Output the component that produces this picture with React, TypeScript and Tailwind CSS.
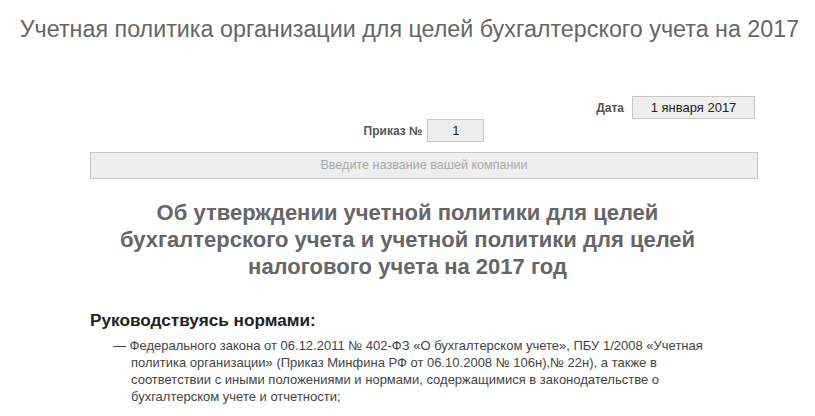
export default function App() {
  return (
    <div className="min-h-screen bg-white text-[#666]" style={{ fontFamily: '"Liberation Sans", Arial, sans-serif' }}>
      <h1 className="pl-[4px] pt-[15px] text-center text-[23.3px] font-normal leading-[28px] text-[#666]">
        Учетная политика организации для целей бухгалтерского учета на 2017
      </h1>

      <div className="ml-[90px] mt-[53px] w-[668px]">
        <div className="flex items-center justify-end gap-[8px] pr-[3px]">
          <span className="text-[12px] font-bold text-[#555]">Дата</span>
          <div className="flex h-[23px] w-[123px] items-center justify-center border border-[#c8c8c8] bg-[#eeeeee] text-[13px] text-[#222]">
            1 января 2017
          </div>
        </div>
        <div className="flex items-center justify-center gap-[5px]">
          <span className="text-[12px] font-bold text-[#555]">Приказ №</span>
          <div className="flex h-[23px] w-[57px] items-center justify-center border border-[#c8c8c8] bg-[#eeeeee] text-[13px] text-[#222]">
            1
          </div>
        </div>
        <div className="mt-[10px] flex h-[27px] items-center justify-center border border-[#c8c8c8] bg-[#eeeeee] text-[12.6px] text-[#aaa]">
          Введите название вашей компании
        </div>
      </div>

      <div className="ml-[90px] w-[635px]">
        <h2 className="mt-[20px] text-center text-[22px] font-bold leading-[27px] text-[#666]">
          Об утверждении учетной политики для целей бухгалтерского учета и учетной политики для целей налогового учета на 2017 год
        </h2>

        <h3 className="mt-[29px] text-[17.2px] font-bold leading-[22px] text-[#222]">Руководствуясь нормами:</h3>

        <p className="mt-[6px] pl-[41px] -indent-[18px] text-[13px] leading-[17px] text-[#444]">
          — Федерального закона от 06.12.2011 № 402-ФЗ «О бухгалтерском учете», ПБУ 1/2008 «Учетная политика организации» (Приказ Минфина РФ от 06.10.2008 № 106н),№ 22н), а также в соответствии с иными положениями и нормами, содержащимися в законодательстве о бухгалтерском учете и отчетности;
        </p>
      </div>
    </div>
  )
}
